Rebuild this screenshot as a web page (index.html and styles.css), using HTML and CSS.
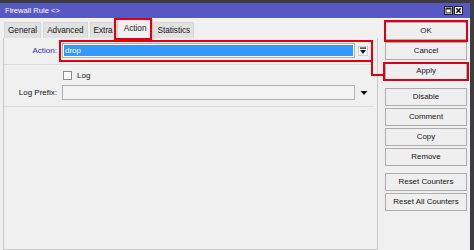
FILE: index.html
```html
<!DOCTYPE html>
<html lang="en">
<head>
  <meta charset="UTF-8">
  <title>Firewall Rule</title>
  <link rel="stylesheet" href="styles.css">
</head>
<body>
<div class="frame">
  <div class="window">
    <div class="titlebar">
      <span class="title">Firewall Rule &lt;&gt;</span>
      <span class="tb-btns">
        <svg width="9" height="9" viewBox="0 0 9 9"><rect x="0.5" y="0.5" width="8" height="8" fill="#fff" stroke="#222"/><rect x="2" y="2" width="5" height="5" fill="none" stroke="#222"/><rect x="2" y="2" width="5" height="1.5" fill="#222"/></svg>
        <svg width="9" height="9" viewBox="0 0 9 9"><rect x="0.5" y="0.5" width="8" height="8" fill="#fff" stroke="#222"/><path d="M2.3 2.3 L6.7 6.7 M6.7 2.3 L2.3 6.7" stroke="#111" stroke-width="1.6"/></svg>
      </span>
    </div>
    <div class="main">
      <div class="left">
        <div class="tabs">
          <div class="tab">General</div>
          <div class="tab">Advanced</div>
          <div class="tab">Extra</div>
          <div class="tab active">Action</div>
          <div class="tab">Statistics</div>
        </div>
        <div class="page">
          <div class="row row-action">
            <label class="lbl changed">Action:</label>
            <div class="field"><span class="sel">drop</span></div>
            <div class="drop-btn">
              <svg width="8" height="8" viewBox="0 0 8 8"><rect x="1" y="0.5" width="6" height="1.2" fill="#111"/><path d="M1 3 L7 3 L4 7 Z" fill="#111"/></svg>
            </div>
          </div>
          <div class="sep"></div>
          <div class="row row-log">
            <span class="lbl"></span>
            <span class="check"></span>
            <span class="check-text">Log</span>
          </div>
          <div class="row row-prefix">
            <label class="lbl">Log Prefix:</label>
            <div class="field"></div>
            <span class="arrow">
              <svg width="8" height="6" viewBox="0 0 8 6"><path d="M0.5 1 L7.5 1 L4 5 Z" fill="#111"/></svg>
            </span>
          </div>
          <div class="sep"></div>
        </div>
      </div>
      <div class="right">
        <div class="btn">OK</div>
        <div class="btn">Cancel</div>
        <div class="btn">Apply</div>
        <div class="btn group">Disable</div>
        <div class="btn">Comment</div>
        <div class="btn">Copy</div>
        <div class="btn">Remove</div>
        <div class="btn group2">Reset Counters</div>
        <div class="btn">Reset All Counters</div>
      </div>
    </div>
  </div>

  <!-- red highlight marks drawn over the dialog -->
  <div class="mark mark-tab"></div>
  <div class="mark mark-action"></div>
  <div class="mark-line line-down"></div>
  <div class="mark-line line-across"></div>
  <div class="mark mark-ok"></div>
  <div class="mark mark-apply"></div>
</div>
</body>
</html>
```

FILE: styles.css
```css
body {
  margin: 0;
  padding: 0;
  background-color: #3d3d40;
  font-family: "Liberation Sans", Arial, sans-serif;
  font-size: 8px;
  color: #141414;
}

.frame {
  position: relative;
  width: 474px;
  height: 250px;
}

.window {
  position: relative;
  top: 3px;
  width: 470px;
  height: 247px;
  background-color: #f0f0f0;
  display: flex;
  flex-direction: column;
}

.titlebar {
  height: 15px;
  background-color: #5858c4;
  color: #fff;
  display: flex;
  align-items: center;
  justify-content: space-between;
  padding: 0 7px 0 5px;
  border-bottom: 1px solid #f7f7f7;
}

.title {
  font-size: 7.6px;
}

.tb-btns {
  display: flex;
  gap: 1px;
}

.tb-btns svg {
  display: block;
}

.main {
  flex: 1;
  display: flex;
}

.left {
  width: 378px;
  display: flex;
  flex-direction: column;
  padding-top: 3px;
  box-sizing: border-box;
}

.tabs {
  display: flex;
  align-items: flex-end;
  padding-left: 4px;
  height: 16px;
}

.tab {
  height: 16px;
  line-height: 15px;
  box-sizing: border-box;
  padding: 0 3px;
  margin-right: 2px;
  background-color: #e1e1e1;
  border: 1px solid #d6d6d6;
  border-bottom: none;
  font-size: 8.2px;
}

.tab.active {
  height: 19px;
  line-height: 18px;
  padding: 0 6px;
  margin-left: -2px;
  margin-right: 0;
  background-color: #f0f0f0;
  border-color: #cfcfcf;
}

.page {
  flex: 1;
  margin-left: 3px;
  border: 1px solid #c9c9c9;
  border-top: none;
  padding-top: 5px;
}

.row {
  display: flex;
  align-items: center;
}

.row-action {
  height: 15px;
}

.row-log {
  height: 10px;
  margin-top: 5px;
}

.row-prefix {
  height: 15px;
  margin-top: 5px;
}

.sep {
  margin-top: 6px;
  margin-right: 4px;
  border-top: 1px solid #dcdcdc;
}

.lbl {
  width: 53px;
  margin-right: 5px;
  text-align: right;
  flex-shrink: 0;
}

.lbl.changed {
  color: #2a2ad0;
}

.field {
  width: 293px;
  height: 15px;
  box-sizing: border-box;
  border: 1px solid #b2b2b2;
  background-color: #f3f3f3;
}

.row-action .field {
  background-color: #fff;
  padding: 1px;
}

.sel {
  display: block;
  height: 100%;
  background-color: #3399ff;
  color: #fff;
  line-height: 11px;
  padding-left: 1px;
}

.drop-btn {
  width: 10px;
  height: 10px;
  margin-left: 3px;
  box-sizing: border-box;
  border: 1px solid #d0d0d0;
  background-color: #fafafa;
  display: flex;
  align-items: center;
  justify-content: center;
}

.arrow {
  margin-left: 5px;
  display: flex;
}

.check {
  width: 9px;
  height: 9px;
  box-sizing: border-box;
  border: 1px solid #8f8f8f;
  background-color: #fff;
  margin-left: 1px;
  margin-right: 5px;
}

.right {
  flex: 1;
  display: flex;
  flex-direction: column;
  gap: 2px;
  padding: 3px 3px 0 7px;
}

.btn {
  height: 18px;
  line-height: 16px;
  box-sizing: border-box;
  border: 1px solid #adadad;
  background-color: #efefef;
  text-align: center;
  font-size: 7.9px;
}

.btn.group {
  margin-top: 6px;
}

.btn.group2 {
  margin-top: 5px;
}

.mark {
  position: absolute;
  box-sizing: border-box;
  border: 2px solid #e2000e;
}

.mark-line {
  position: absolute;
  background-color: #e2000e;
}

.mark-tab {
  left: 114px;
  top: 18px;
  width: 38px;
  height: 22px;
}

.mark-action {
  left: 59px;
  top: 40px;
  width: 314px;
  height: 22px;
}

.line-down {
  left: 371px;
  top: 60px;
  width: 2px;
  height: 16px;
}

.line-across {
  left: 371px;
  top: 74px;
  width: 13px;
  height: 2px;
}

.mark-ok {
  left: 384px;
  top: 20px;
  width: 84px;
  height: 22px;
}

.mark-apply {
  left: 383px;
  top: 62px;
  width: 86px;
  height: 19px;
}
```
